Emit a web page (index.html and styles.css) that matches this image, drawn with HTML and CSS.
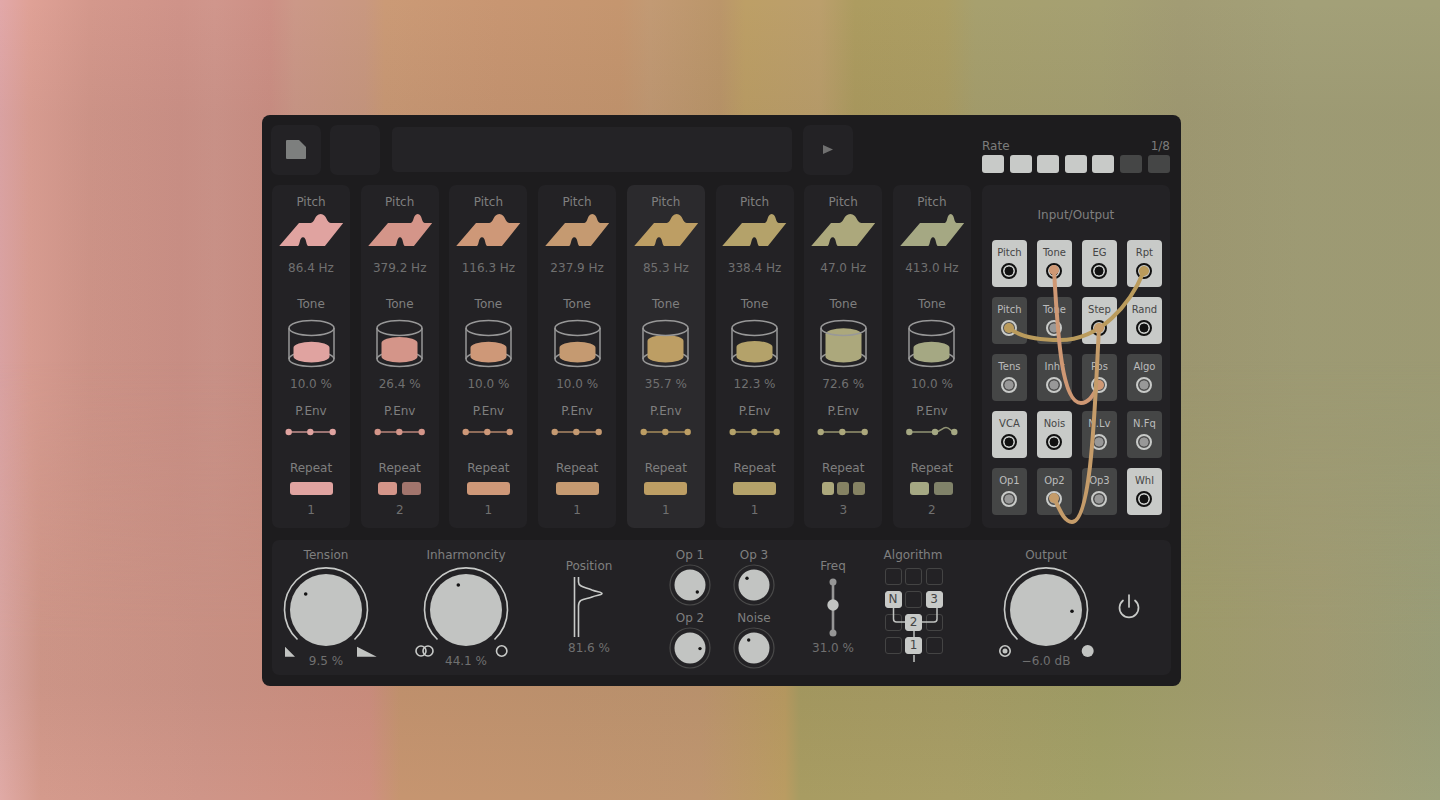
FILE: index.html
```html
<!DOCTYPE html>
<html lang="en">
<head>
<meta charset="utf-8">
<title>Synth module</title>
<link rel="stylesheet" href="styles.css">
</head>
<body>
<svg class="defs" width="0" height="0" aria-hidden="true">
  <defs>
    <g id="cyl-back">
      <ellipse cx="23.5" cy="40" rx="22.5" ry="7.5"/>
      <path d="M1 9V40M46 9V40"/>
    </g>
    <g id="env">
      <path class="env-line" d="M5 6H49"/>
      <circle cx="4.7" cy="6" r="3.2"/><circle cx="26.3" cy="6" r="3.2"/><circle cx="48.7" cy="6" r="3.2"/>
    </g>
  </defs>
</svg>
<main class="panel">
  <header class="top">
    <button class="btn"><svg class="ic-file" viewBox="0 0 20 19"><path d="M1 0H13L20 7V18a1 1 0 0 1-1 1H1a1 1 0 0 1-1-1V1a1 1 0 0 1 1-1Z"/></svg></button>
    <div class="btn btn-two"></div>
    <div class="display"></div>
    <button class="btn btn-play"><svg class="ic-play" viewBox="0 0 10 9"><path d="M0 0L10 4.5L0 9Z"/></svg></button>
    <div class="rate">
      <div class="rate-head"><span>Rate</span><span>1/8</span></div>
      <div class="rate-keys"><i class="key on"></i><i class="key on"></i><i class="key on"></i><i class="key on"></i><i class="key on"></i><i class="key"></i><i class="key"></i></div>
    </div>
  </header>

  <section class="mid">
    <div class="cols">
      <article class="col c1">
        <div class="t first">Pitch</div>
        <svg class="shape" viewBox="0 0 64.3 32.3"><path d="M0 32.3L20 9H31.7C36 9 35.5 0 41.7 0C47.9 0 47.4 9 51.7 9H64.3L45.7 32.3H30C26.5 32.3 28 23.3 24 23.3C20 23.3 21.5 32.3 18 32.3Z"/></svg>
        <div class="v hz">86.4 Hz</div>
        <div class="t tone">Tone</div>
        <svg class="cyl" viewBox="0 0 47 50"><use href="#cyl-back"/><path class="fill" d="M5.5 28.7A18 6 0 0 1 41.5 28.7V37.5A18 6 0 0 1 5.5 37.5Z"/><ellipse cx="23.5" cy="9" rx="22.5" ry="7.5"/></svg>
        <div class="v pct">10.0 %</div>
        <div class="t penv">P.Env</div>
        <svg class="env" viewBox="0 0 54 12"><use href="#env"/></svg>
        <div class="t rep">Repeat</div>
        <div class="bars"><i class="bar"></i></div>
        <div class="v num">1</div>
      </article>
      <article class="col c2">
        <div class="t first">Pitch</div>
        <svg class="shape" viewBox="0 0 64.3 32.3"><path d="M0 32.3L20 9H42.7C46 9 45 0 49.7 0C54.4 0 53.4 9 56.7 9H64.3L45.7 32.3H37.5C34.5 32.3 35.5 23.3 32 23.3C28.5 23.3 29.5 32.3 26.5 32.3Z"/></svg>
        <div class="v hz">379.2 Hz</div>
        <div class="t tone">Tone</div>
        <svg class="cyl" viewBox="0 0 47 50"><use href="#cyl-back"/><path class="fill" d="M5.5 24A18 6 0 0 1 41.5 24V37.5A18 6 0 0 1 5.5 37.5Z"/><ellipse cx="23.5" cy="9" rx="22.5" ry="7.5"/></svg>
        <div class="v pct">26.4 %</div>
        <div class="t penv">P.Env</div>
        <svg class="env" viewBox="0 0 54 12"><use href="#env"/></svg>
        <div class="t rep">Repeat</div>
        <div class="bars"><i class="bar"></i><i class="bar off"></i></div>
        <div class="v num">2</div>
      </article>
      <article class="col c3">
        <div class="t first">Pitch</div>
        <svg class="shape" viewBox="0 0 64.3 32.3"><path d="M0 32.3L20 9H33.3C37.6 9 37.1 0 43.3 0C49.5 0 49 9 53.3 9H64.3L45.7 32.3H32C28.5 32.3 30 23.3 26 23.3C22 23.3 23.5 32.3 20 32.3Z"/></svg>
        <div class="v hz">116.3 Hz</div>
        <div class="t tone">Tone</div>
        <svg class="cyl" viewBox="0 0 47 50"><use href="#cyl-back"/><path class="fill" d="M5.5 28.7A18 6 0 0 1 41.5 28.7V37.5A18 6 0 0 1 5.5 37.5Z"/><ellipse cx="23.5" cy="9" rx="22.5" ry="7.5"/></svg>
        <div class="v pct">10.0 %</div>
        <div class="t penv">P.Env</div>
        <svg class="env" viewBox="0 0 54 12"><use href="#env"/></svg>
        <div class="t rep">Repeat</div>
        <div class="bars"><i class="bar"></i></div>
        <div class="v num">1</div>
      </article>
      <article class="col c4">
        <div class="t first">Pitch</div>
        <svg class="shape" viewBox="0 0 64.3 32.3"><path d="M0 32.3L20 9H39.3C43 9 42 0 47.3 0C52.6 0 51.6 9 55.3 9H64.3L45.7 32.3H35.3C31.8 32.3 33.3 23.3 29.3 23.3C25.3 23.3 26.8 32.3 23.3 32.3Z"/></svg>
        <div class="v hz">237.9 Hz</div>
        <div class="t tone">Tone</div>
        <svg class="cyl" viewBox="0 0 47 50"><use href="#cyl-back"/><path class="fill" d="M5.5 28.7A18 6 0 0 1 41.5 28.7V37.5A18 6 0 0 1 5.5 37.5Z"/><ellipse cx="23.5" cy="9" rx="22.5" ry="7.5"/></svg>
        <div class="v pct">10.0 %</div>
        <div class="t penv">P.Env</div>
        <svg class="env" viewBox="0 0 54 12"><use href="#env"/></svg>
        <div class="t rep">Repeat</div>
        <div class="bars"><i class="bar"></i></div>
        <div class="v num">1</div>
      </article>
      <article class="col c5 active">
        <div class="t first">Pitch</div>
        <svg class="shape" viewBox="0 0 64.3 32.3"><path d="M0 32.3L20 9H32.7C37 9 36.5 0 42.7 0C48.9 0 48.4 9 52.7 9H64.3L45.7 32.3H31C27.5 32.3 29 23.3 25 23.3C21 23.3 22.5 32.3 19 32.3Z"/></svg>
        <div class="v hz">85.3 Hz</div>
        <div class="t tone">Tone</div>
        <svg class="cyl" viewBox="0 0 47 50"><use href="#cyl-back"/><path class="fill" d="M5.5 22A18 6 0 0 1 41.5 22V37.5A18 6 0 0 1 5.5 37.5Z"/><ellipse cx="23.5" cy="9" rx="22.5" ry="7.5"/></svg>
        <div class="v pct">35.7 %</div>
        <div class="t penv">P.Env</div>
        <svg class="env" viewBox="0 0 54 12"><use href="#env"/></svg>
        <div class="t rep">Repeat</div>
        <div class="bars"><i class="bar"></i></div>
        <div class="v num">1</div>
      </article>
      <article class="col c6">
        <div class="t first">Pitch</div>
        <svg class="shape" viewBox="0 0 64.3 32.3"><path d="M0 32.3L20 9H42.7C46 9 45 0 49.7 0C54.4 0 53.4 9 56.7 9H64.3L45.7 32.3H37.8C34.8 32.3 35.8 23.3 32.3 23.3C28.8 23.3 29.8 32.3 26.8 32.3Z"/></svg>
        <div class="v hz">338.4 Hz</div>
        <div class="t tone">Tone</div>
        <svg class="cyl" viewBox="0 0 47 50"><use href="#cyl-back"/><path class="fill" d="M5.5 28A18 6 0 0 1 41.5 28V37.5A18 6 0 0 1 5.5 37.5Z"/><ellipse cx="23.5" cy="9" rx="22.5" ry="7.5"/></svg>
        <div class="v pct">12.3 %</div>
        <div class="t penv">P.Env</div>
        <svg class="env" viewBox="0 0 54 12"><use href="#env"/></svg>
        <div class="t rep">Repeat</div>
        <div class="bars"><i class="bar"></i></div>
        <div class="v num">1</div>
      </article>
      <article class="col c7">
        <div class="t first">Pitch</div>
        <svg class="shape" viewBox="0 0 64.3 32.3"><path d="M0 32.3L20 9H28.3C33 9 32.5 0 39.3 0C46.1 0 45.6 9 50.3 9H64.3L45.7 32.3H27.7C24.2 32.3 25.7 23.3 21.7 23.3C17.7 23.3 19.2 32.3 15.7 32.3Z"/></svg>
        <div class="v hz">47.0 Hz</div>
        <div class="t tone">Tone</div>
        <svg class="cyl" viewBox="0 0 47 50"><use href="#cyl-back"/><path class="fill" d="M5.5 15.3A18 6 0 0 1 41.5 15.3V37.5A18 6 0 0 1 5.5 37.5Z"/><ellipse cx="23.5" cy="9" rx="22.5" ry="7.5"/></svg>
        <div class="v pct">72.6 %</div>
        <div class="t penv">P.Env</div>
        <svg class="env" viewBox="0 0 54 12"><use href="#env"/></svg>
        <div class="t rep">Repeat</div>
        <div class="bars three"><i class="bar"></i><i class="bar off"></i><i class="bar off"></i></div>
        <div class="v num">3</div>
      </article>
      <article class="col c8">
        <div class="t first">Pitch</div>
        <svg class="shape" viewBox="0 0 64.3 32.3"><path d="M0 32.3L20 9H44.7C47.7 9 46.7 0 50.7 0C54.7 0 53.7 9 56.7 9H64.3L45.7 32.3H38.5C35.5 32.3 36.5 23.3 33 23.3C29.5 23.3 30.5 32.3 27.5 32.3Z"/></svg>
        <div class="v hz">413.0 Hz</div>
        <div class="t tone">Tone</div>
        <svg class="cyl" viewBox="0 0 47 50"><use href="#cyl-back"/><path class="fill" d="M5.5 28.7A18 6 0 0 1 41.5 28.7V37.5A18 6 0 0 1 5.5 37.5Z"/><ellipse cx="23.5" cy="9" rx="22.5" ry="7.5"/></svg>
        <div class="v pct">10.0 %</div>
        <div class="t penv">P.Env</div>
        <svg class="env" viewBox="0 0 54 12"><path class="env-line" d="M5 6H30C36 6 37 1.5 41 1.5C45 1.5 46 6 49 6"/><circle cx="4.3" cy="6" r="3.2"/><circle cx="30" cy="6" r="3.2"/><circle cx="49.3" cy="6" r="3.2"/></svg>
        <div class="t rep">Repeat</div>
        <div class="bars"><i class="bar"></i><i class="bar off"></i></div>
        <div class="v num">2</div>
      </article>
    </div>

    <aside class="io">
      <div class="t io-title">Input/Output</div>
      <div class="jacks">
        <div class="cell lit"><span>Pitch</span><i class="jack"></i></div>
        <div class="cell lit"><span>Tone</span><i class="jack"></i></div>
        <div class="cell lit"><span>EG</span><i class="jack"></i></div>
        <div class="cell lit"><span>Rpt</span><i class="jack"></i></div>
        <div class="cell"><span>Pitch</span><i class="jack"></i></div>
        <div class="cell"><span>Tone</span><i class="jack"></i></div>
        <div class="cell lit"><span>Step</span><i class="jack"></i></div>
        <div class="cell lit"><span>Rand</span><i class="jack"></i></div>
        <div class="cell"><span>Tens</span><i class="jack"></i></div>
        <div class="cell"><span>Inhr</span><i class="jack"></i></div>
        <div class="cell"><span>Pos</span><i class="jack"></i></div>
        <div class="cell"><span>Algo</span><i class="jack"></i></div>
        <div class="cell lit"><span>VCA</span><i class="jack"></i></div>
        <div class="cell lit"><span>Nois</span><i class="jack"></i></div>
        <div class="cell"><span>N.Lv</span><i class="jack"></i></div>
        <div class="cell"><span>N.Fq</span><i class="jack"></i></div>
        <div class="cell"><span>Op1</span><i class="jack"></i></div>
        <div class="cell"><span>Op2</span><i class="jack"></i></div>
        <div class="cell"><span>Op3</span><i class="jack"></i></div>
        <div class="cell lit"><span>Whl</span><i class="jack"></i></div>
      </div>
      <svg class="cables" viewBox="0 0 188 343">
        <g class="cable tan"><path d="M162 86C148 120 118 155 78 155C58 155 38 152 27 143"/><circle cx="162" cy="86" r="5"/><circle cx="27" cy="143" r="5"/></g>
        <g class="cable salmon"><path d="M72 85C76 155 80 218 99 218C108 218 112 208 117 200"/><circle cx="72" cy="85" r="5"/><circle cx="117" cy="200" r="5"/></g>
        <g class="cable sand"><path d="M117 143C113 215 110 337 90 337C82 337 78 325 72 313"/><circle cx="117" cy="143" r="5"/><circle cx="72" cy="313" r="5"/></g>
      </svg>
    </aside>
  </section>

  <section class="bottom">
    <div class="group big g-tension">
      <div class="t">Tension</div>
      <svg class="knob-big" viewBox="0 0 108 93">
        <path class="arc" d="M25.5 74.5A41.5 41.5 0 1 1 82.5 74.5"/>
        <circle class="disc" cx="54" cy="45" r="36"/>
        <circle class="pip" cx="33.7" cy="29" r="1.8"/>
        <path class="disc" d="M13 81.7V91.7H23ZM85 81.7V91.7H104.7Z"/>
      </svg>
      <div class="v after">9.5 %</div>
    </div>
    <div class="group big g-inharm">
      <div class="t">Inharmoncity</div>
      <svg class="knob-big" viewBox="0 0 108 93">
        <path class="arc" d="M25.5 74.5A41.5 41.5 0 1 1 82.5 74.5"/>
        <circle class="disc" cx="54" cy="45" r="36"/>
        <circle class="pip" cx="46.3" cy="20" r="1.8"/>
        <circle class="arc" cx="9" cy="86" r="5"/><circle class="arc" cx="16" cy="86" r="5"/>
        <circle class="arc" cx="89.7" cy="86" r="5.2"/>
      </svg>
      <div class="v after">44.1 %</div>
    </div>
    <div class="group g-position">
      <div class="t low">Position</div>
      <svg class="pos-ic" viewBox="0 0 60 62"><path class="arc" d="M15.5 1V61M19.5 1V6C19.5 11 26 11 33 14C38 16 43 16 43 17.5C43 19 38 19 33 21C27 23.5 19.5 22 19.5 30V61"/></svg>
      <div class="v under">81.6 %</div>
    </div>
    <div class="group g-ops">
      <div class="op"><div class="t">Op 1</div><svg class="knob-sm" viewBox="0 0 42 42"><circle class="ring" cx="21" cy="21" r="20"/><circle class="disc" cx="21" cy="21" r="15.5"/><circle class="pip" cx="28.3" cy="28" r="1.7"/></svg></div>
      <div class="op"><div class="t">Op 3</div><svg class="knob-sm" viewBox="0 0 42 42"><circle class="ring" cx="21" cy="21" r="20"/><circle class="disc" cx="21" cy="21" r="15.5"/><circle class="pip" cx="14" cy="14.3" r="1.7"/></svg></div>
      <div class="op"><div class="t">Op 2</div><svg class="knob-sm" viewBox="0 0 42 42"><circle class="ring" cx="21" cy="21" r="20"/><circle class="disc" cx="21" cy="21" r="15.5"/><circle class="pip" cx="31" cy="21.6" r="1.7"/></svg></div>
      <div class="op"><div class="t">Noise</div><svg class="knob-sm" viewBox="0 0 42 42"><circle class="ring" cx="21" cy="21" r="20"/><circle class="disc" cx="21" cy="21" r="15.5"/><circle class="pip" cx="15.7" cy="13" r="1.7"/></svg></div>
    </div>
    <div class="group g-freq">
      <div class="t low">Freq</div>
      <svg class="slider" viewBox="0 0 14 62"><path class="slide-line" d="M7 6V57"/><circle class="slide-end" cx="7" cy="6" r="3.5"/><circle class="slide-end" cx="7" cy="57" r="3.5"/><circle class="disc" cx="7" cy="29" r="5.7"/></svg>
      <div class="v under">31.0 %</div>
    </div>
    <div class="group g-algo">
      <div class="t">Algorithm</div>
      <div class="algo">
        <i class="slot"></i><i class="slot"></i><i class="slot"></i>
        <i class="slot on">N</i><i class="slot"></i><i class="slot on">3</i>
        <i class="slot"></i><i class="slot on">2</i><i class="slot"></i>
        <i class="slot"></i><i class="slot on">1</i><i class="slot"></i>
        <svg class="wires" viewBox="0 0 58 94"><path d="M8.5 40V51Q8.5 54 11.5 54H49Q52 54 52 51V40M29 63V70M29 87V94"/></svg>
      </div>
    </div>
    <div class="group big g-output">
      <div class="t">Output</div>
      <svg class="knob-big" viewBox="0 0 108 93">
        <path class="arc" d="M25.5 74.5A41.5 41.5 0 1 1 82.5 74.5"/>
        <circle class="disc" cx="54" cy="45" r="36"/>
        <circle class="pip" cx="80" cy="46.3" r="1.8"/>
        <circle class="arc" cx="13" cy="86" r="5.2"/><circle class="disc" cx="13" cy="86" r="2.5"/>
        <circle class="disc" cx="95.7" cy="86" r="6"/>
      </svg>
      <div class="v after">−6.0 dB</div>
    </div>
    <div class="group g-power">
      <svg class="power" viewBox="0 0 24 26"><path d="M12 1V13M6 6.5A9.5 9.5 0 1 0 18 6.5"/></svg>
    </div>
  </section>
</main>
</body>
</html>
```

FILE: styles.css
```css
* { box-sizing: border-box; }

html, body { height: 100%; }

body {
  margin: 0;
  position: relative;
  overflow: hidden;
  display: flex;
  align-items: center;
  justify-content: center;
  font-family: "DejaVu Sans", "Liberation Sans", sans-serif;
  font-size: 12px;
  background:
    linear-gradient(90deg,
      #e2a8a9 0, #dfa196 30px, #d4988c 90px, #cf9389 180px, #d0968c 215px, #cd9085 270px,
      #cc9888 295px, #c99880 365px, #cb9a76 385px, #c89672 500px, #c5966f 620px,
      #c29a74 650px, #bb966a 720px, #bd9f66 745px, #bb9f6c 820px, #ad9c60 855px,
      #ac9e64 945px, #a7a06e 975px, #a5a072 1100px, #a29c74 1180px, #a3a078 1300px, #a2a078 1440px);
}

body::before {
  content: "";
  position: absolute;
  inset: 0;
  background:
    linear-gradient(90deg,
      #e0aaa6 0, #d49a8c 40px, #cf9588 200px, #cf9080 370px, #c69570 400px, #c29570 560px,
      #bf9670 700px, #ba9c62 785px, #a89c62 800px, #a89e66 950px, #a2a068 1100px,
      #a5a076 1320px, #9ea27c 1440px);
  -webkit-mask-image: linear-gradient(180deg, transparent 45%, #000 80%);
  mask-image: linear-gradient(180deg, transparent 45%, #000 80%);
}

body::after {
  content: "";
  position: absolute;
  inset: 0;
  background: linear-gradient(180deg, transparent 0, rgba(50,40,30,.05) 115px, rgba(50,40,30,.05) 686px, transparent 800px);
}

.defs { position: absolute; }

.panel {
  position: relative;
  z-index: 1;
  width: 919px;
  height: 571px;
  margin-left: 3px;
  padding: 10px 9px 0;
  background: #1d1c1e;
  border-radius: 8px;
}

.top { display: flex; align-items: flex-start; height: 50px; }

.btn {
  width: 50px;
  height: 50px;
  padding: 0;
  border: 0;
  border-radius: 7px;
  background: #232225;
  display: flex;
  align-items: center;
  justify-content: center;
}
.btn-two { margin-left: 9px; }
.btn-play { margin-left: 11px; }

.ic-file { width: 20px; height: 19px; fill: #7d7f7e; }
.ic-play { width: 10px; height: 9px; fill: #707070; margin-top: -1px; }

.display {
  width: 400px;
  height: 45px;
  margin: 2px 0 0 12px;
  background: #242326;
  border-radius: 5px;
}

.rate { width: 188px; margin: 13px 0 0 129px; color: #7c7c7c; }
.rate-head { display: flex; justify-content: space-between; height: 14px; line-height: 16px; }
.rate-keys { display: flex; gap: 5.6px; margin-top: 3px; }
.key { width: 22px; height: 18px; border-radius: 3px; background: #454646; }
.key.on { background: #c8cac8; }

.mid { display: flex; gap: 11px; margin: 10px 0 0 1px; height: 343px; }
.cols { display: grid; grid-template-columns: repeat(8, 78px); column-gap: 10.71px; }

.col {
  display: flex;
  flex-direction: column;
  align-items: center;
  height: 343px;
  border-radius: 7px;
  background: #232225;
  color: var(--c);
}
.col.active { background: #2b2a2d; }

.c1 { --c: #e0a3a0; }
.c2 { --c: #d49589; }
.c3 { --c: #ce9878; }
.c4 { --c: #c59a71; }
.c5 { --c: #bd9e64; }
.c6 { --c: #b4a26a; }
.c7 { --c: #aca87c; }
.c8 { --c: #a5a883; }

.t, .v { height: 14px; line-height: 16px; white-space: nowrap; text-align: center; }
.t { color: #7f7f7f; }
.v { color: #707070; }

.first { margin-top: 9px; }
.shape { width: 64.3px; height: 32.3px; margin-top: 6px; fill: var(--c); display: block; }
.hz { margin-top: 14px; }
.tone { margin-top: 22px; }
.cyl { width: 47px; height: 50px; margin-top: 9px; display: block; fill: none; stroke: #989898; stroke-width: 1.5; }
.cyl .fill { fill: var(--c); stroke: none; }
.pct { margin-top: 7px; }
.penv { margin-top: 13px; }
.env { width: 54px; height: 12px; margin-top: 9px; display: block; fill: var(--c); }
.env-line { fill: none; stroke: var(--c); stroke-width: 1.5; opacity: .85; }
.rep { margin-top: 22px; }
.bars { display: flex; gap: 5px; width: 43px; height: 13.5px; margin-top: 8px; }
.bars.three { gap: 3.5px; }
.bar { flex: 1; border-radius: 3px; background: var(--c); }
.bar.off { opacity: .72; }
.num { margin-top: 7px; }

.io {
  position: relative;
  width: 188px;
  height: 343px;
  padding: 22px 10px 0;
  border-radius: 7px;
  background: #232225;
}
.jacks {
  display: grid;
  grid-template-columns: repeat(4, 35px);
  grid-auto-rows: 47px;
  column-gap: 10px;
  row-gap: 10px;
  margin-top: 19.5px;
}
.cell {
  display: flex;
  flex-direction: column;
  align-items: center;
  padding-top: 7px;
  border-radius: 4px;
  background: #454646;
  color: #bcbcbc;
  font-size: 10px;
  line-height: 12px;
}
.cell.lit { background: #c8cac8; color: #454545; }
.jack {
  width: 16px;
  height: 16px;
  margin-top: 4px;
  border-radius: 50%;
  border: 2px solid #c8cac8;
  background: radial-gradient(circle, #989898 0 4.2px, #505050 4.8px);
}
.cell.lit .jack {
  border-color: #111;
  background: radial-gradient(circle, #111 0 4.2px, #c8cac8 4.7px);
}

.cables { position: absolute; inset: 0; width: 188px; height: 343px; }
.cable path { fill: none; stroke-width: 4; stroke-linecap: round; }
.tan path { stroke: #ba9b5c; }
.tan circle { fill: #ba9b5c; }
.salmon path { stroke: #cf9874; }
.salmon circle { fill: #cf9874; }
.sand path { stroke: #c59c6a; }
.sand circle { fill: #c59c6a; }

.bottom {
  display: flex;
  align-items: flex-start;
  width: 899px;
  height: 135px;
  margin: 12px 0 0 1px;
  padding-top: 7px;
  border-radius: 7px;
  background: #232225;
}

.group { display: flex; flex-direction: column; align-items: center; flex: none; }
.big { width: 108px; }
.g-inharm { margin-left: 32px; }
.g-position { width: 60px; margin-left: 39px; }
.g-ops { width: 128px; margin-left: 39px; display: grid; grid-template-columns: 64px 64px; row-gap: 0; }
.g-freq { width: 60px; margin-left: 17px; }
.g-algo { width: 80px; margin-left: 10px; }
.g-output { margin-left: 39px; }
.g-power { width: 40px; margin: 47px 0 0 9px; }

.knob-big { width: 108px; height: 93px; margin-top: 4px; display: block; }
.after { margin-top: -5px; }
.under { margin-top: 2px; }
.arc { fill: none; stroke: #c8cac8; stroke-width: 1.6; }
.disc { fill: #c2c4c2; }
.pip { fill: #141414; }

.low { margin-top: 11px; }
.pos-ic { width: 60px; height: 62px; margin-top: 4px; display: block; }

.op { display: flex; flex-direction: column; align-items: center; height: 63px; }
.knob-sm { width: 42px; height: 42px; margin-top: 3px; display: block; }
.ring { fill: none; stroke: #4a4a4a; stroke-width: 1.2; }

.slider { width: 14px; height: 62px; margin-top: 4px; display: block; }
.slide-line { fill: none; stroke: #969696; stroke-width: 2.6; }
.slide-end { fill: #969696; }

.algo {
  position: relative;
  display: grid;
  grid-template-columns: repeat(3, 17px);
  grid-auto-rows: 17px;
  column-gap: 3.5px;
  row-gap: 6px;
  margin: 7px 0 0 1px;
}
.slot {
  display: flex;
  align-items: center;
  justify-content: center;
  border: 1.7px solid #444;
  border-radius: 3px;
  color: #454545;
  font-size: 12px;
  font-style: normal;
  line-height: 1;
}
.slot.on { position: relative; z-index: 1; border-color: #c8cac8; background: #c8cac8; }
.wires { position: absolute; left: 0; top: 0; width: 58px; height: 94px; fill: none; stroke: #c0c2c0; stroke-width: 1.5; }

.power { width: 24px; height: 26px; display: block; margin: 0 auto; fill: none; stroke: #c8cac8; stroke-width: 1.7; stroke-linecap: round; }
```
